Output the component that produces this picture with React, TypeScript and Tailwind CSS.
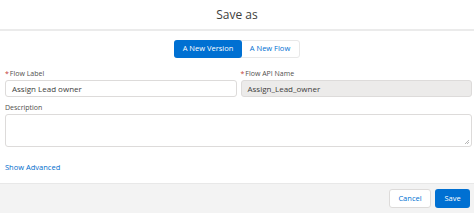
import React from "react";

const font = { fontFamily: '"Open Sans", "Noto Sans", sans-serif' };

function Label({ children, required }: { children: React.ReactNode; required?: boolean }) {
  return (
    <div className="h-[10px] text-[7px] leading-[10px] text-[#514f4d]">
      {required && <span className="mr-[1px] text-[#c23934]">*</span>}
      {children}
    </div>
  );
}

export default function App() {
  return (
    <div className="flex h-[213px] w-[474px] flex-col bg-white" style={font}>
      <div className="flex h-[31px] shrink-0 items-center justify-center border-b-2 border-[#ebebeb]">
        <h2 className="text-[12px] text-[#3e3e3c]">Save as</h2>
      </div>

      <div className="flex flex-1 flex-col">
        <div className="mt-[9px] flex justify-center">
          <div className="flex h-[18px] rounded-[3px] border border-[#e8e8e8] text-[7.5px]">
            <button className="-m-px flex w-[68px] items-center justify-center rounded-[3px] bg-[#0070d2] text-white">
              A New Version
            </button>
            <button className="flex w-[58px] items-center justify-center text-[#0070d2]">A New Flow</button>
          </div>
        </div>

        <div className="mt-[11px] grid grid-cols-2 gap-[4px] pl-[5px] pr-[2px]">
          <div>
            <Label required>Flow Label</Label>
            <div className="mt-[1px] flex h-[17px] items-center rounded-[3px] border border-[#dddbda] px-[6px] text-[8px] text-[#3e3e3c]">
              Assign Lead owner
            </div>
          </div>
          <div>
            <Label required>Flow API Name</Label>
            <div className="mt-[1px] flex h-[17px] items-center rounded-[3px] border border-[#dddbda] bg-[#ecebea] px-[6px] text-[8px] text-[#3e3e3c]">
              Assign_Lead_owner
            </div>
          </div>
        </div>

        <div className="mt-[6px] pl-[5px] pr-[2px]">
          <Label>Description</Label>
          <div className="relative mt-[1px] h-[33px] rounded-[3px] border border-[#dddbda]">
            <svg className="absolute bottom-[2px] right-[2px]" width="5" height="5" viewBox="0 0 5 5">
              <path d="M1 5L5 1M3 5L5 3" stroke="#9a9a9a" strokeWidth="0.7" />
            </svg>
          </div>
        </div>

        <div className="mt-[15px] pl-[5px] text-[7.5px] leading-[10px] text-[#006dcc]">Show Advanced</div>
      </div>

      <div className="flex h-[30px] shrink-0 items-center justify-end gap-[4px] border-t border-[#e8e8e8] bg-[#f3f3f3] pr-[4px]">
        <button className="h-[19px] w-[42px] rounded-[3px] border border-[#dddbda] bg-white text-[7.5px] text-[#0070d2]">
          Cancel
        </button>
        <button className="h-[19px] w-[35px] rounded-[3px] bg-[#0070d2] text-[7.5px] text-white">Save</button>
      </div>
    </div>
  );
}
